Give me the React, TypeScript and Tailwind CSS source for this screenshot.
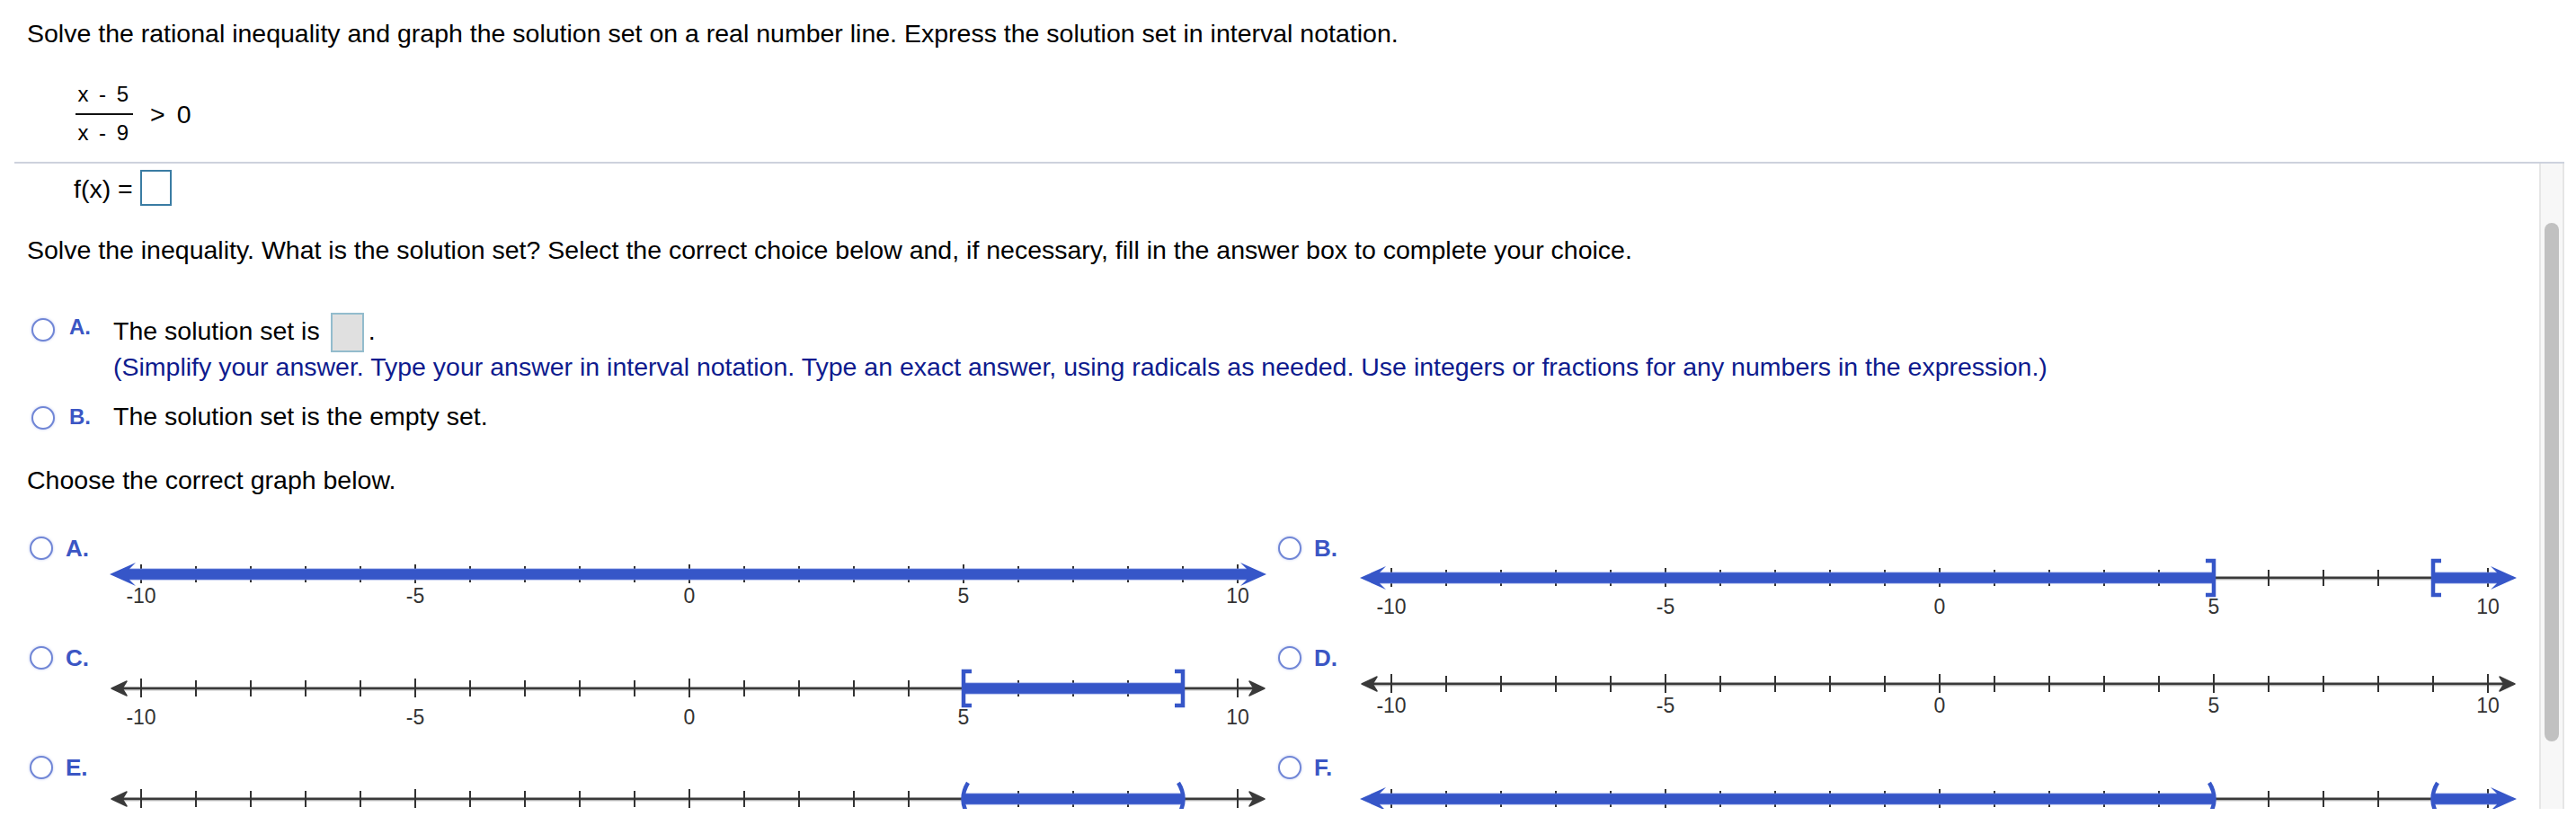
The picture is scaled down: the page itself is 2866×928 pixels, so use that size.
import React from 'react';

type Mark = '[' | ']' | '(' | ')';

interface Seg {
  from: number | null;
  to: number | null;
  left?: Mark;
  right?: Mark;
}

interface LineProps {
  lineY: number;
  labelY: number | null;
  segs: Seg[];
}

const BLUE = '#3656c8';
const GRAY = '#3a3a3a';

// -10 sits at 44, one unit is 61px
const px = (v: number) => 44 + (v + 10) * 61;

const marker = (m: Mark, x0: number, y: number, key: string) => {
  let d = '';
  if (m === '[') d = `M${x0 + 9} ${y - 19} H${x0} V${y + 19} H${x0 + 9}`;
  if (m === ']') d = `M${x0 - 9} ${y - 19} H${x0} V${y + 19} H${x0 - 9}`;
  if (m === '(') d = `M${x0 + 5} ${y - 18} Q${x0 - 6} ${y} ${x0 + 5} ${y + 18}`;
  if (m === ')') d = `M${x0 - 5} ${y - 18} Q${x0 + 6} ${y} ${x0 - 5} ${y + 18}`;
  return <path key={key} d={d} fill="none" stroke={BLUE} strokeWidth={4.5} />;
};

const NumberLine: React.FC<LineProps> = ({ lineY: y, labelY, segs }) => {
  const ticks = Array.from({ length: 21 }, (_, i) => i - 10);
  const blueLeft = segs.some((s) => s.from === null);
  const blueRight = segs.some((s) => s.to === null);

  return (
    <svg width={1300} height={80} className="block overflow-visible">
      <line x1={20} x2={1285} y1={y} y2={y} stroke={GRAY} strokeWidth={3} />
      <line x1={20} x2={1285} y1={y + 2} y2={y + 2} stroke="#c4c4c4" strokeWidth={1} />
      {!blueLeft && (
        <path
          d={`M11 ${y} L28 ${y - 8} L23 ${y} L28 ${y + 8} Z`}
          fill={GRAY}
          stroke={GRAY}
          strokeWidth={1.5}
          strokeLinejoin="round"
        />
      )}
      {!blueRight && (
        <path
          d={`M1294 ${y} L1277 ${y - 8} L1282 ${y} L1277 ${y + 8} Z`}
          fill={GRAY}
          stroke={GRAY}
          strokeWidth={1.5}
          strokeLinejoin="round"
        />
      )}
      {ticks.map((v) => {
        const major = v % 5 === 0;
        return (
          <line
            key={v}
            x1={px(v)}
            x2={px(v)}
            y1={major ? y - 11 : y - 9}
            y2={major ? y + 10 : y + 9}
            stroke="#333"
            strokeWidth={2}
          />
        );
      })}
      {segs.map((s, i) => {
        const x1 = s.from === null ? 30 : px(s.from);
        const x2 = s.to === null ? 1275 : px(s.to);
        return (
          <g key={i}>
            <rect x={x1} y={y - 6} width={x2 - x1} height={12} fill={BLUE} stroke="#6f86dc" strokeWidth={0.8} />
            {s.from === null && (
              <path d={`M9 ${y} L38 ${y - 13} L31 ${y - 6} L31 ${y + 6} L38 ${y + 13} Z`} fill={BLUE} />
            )}
            {s.to === null && (
              <path d={`M1296 ${y} L1267 ${y - 13} L1274 ${y - 6} L1274 ${y + 6} L1267 ${y + 13} Z`} fill={BLUE} />
            )}
            {s.left && s.from !== null && marker(s.left, px(s.from), y, 'l')}
            {s.right && s.to !== null && marker(s.right, px(s.to), y, 'r')}
          </g>
        );
      })}
      {labelY !== null &&
        [-10, -5, 0, 5, 10].map((v) => (
          <text key={v} x={px(v)} y={labelY} textAnchor="middle" fontSize={23} fill="#333">
            {v}
          </text>
        ))}
    </svg>
  );
};

const Radio = () => (
  <span className="block w-[26px] h-[26px] shrink-0 rounded-full border-2 border-[#7086d6] bg-white shadow-[0_0_3px_rgba(90,115,215,0.4)]" />
);

const graphs: { key: string; line: LineProps }[] = [
  { key: 'A', line: { lineY: 14, labelY: 46, segs: [{ from: null, to: null }] } },
  {
    key: 'B',
    line: {
      lineY: 18,
      labelY: 58,
      segs: [
        { from: null, to: 5, right: ']' },
        { from: 9, to: null, left: '[' },
      ],
    },
  },
  { key: 'C', line: { lineY: 19, labelY: 59, segs: [{ from: 5, to: 9, left: '[', right: ']' }] } },
  { key: 'D', line: { lineY: 14, labelY: 46, segs: [] } },
  // last row is scrolled past the bottom of the pane, labels are out of view
  { key: 'E', line: { lineY: 20, labelY: null, segs: [{ from: 5, to: 9, left: '(', right: ')' }] } },
  {
    key: 'F',
    line: {
      lineY: 20,
      labelY: null,
      segs: [
        { from: null, to: 5, right: ')' },
        { from: 9, to: null, left: '(' },
      ],
    },
  },
];

export default function App() {
  return (
    <div className="w-[2866px] h-[928px] overflow-hidden bg-white text-black font-['Liberation_Sans',Arial,sans-serif] pl-[16px] pr-[13px] flex flex-col">
      {/* Question header */}
      <div className="pl-[14px] pt-[22px] pb-[19px]">
        <p className="text-[28.5px] leading-[30px]">
          Solve the rational inequality and graph the solution set on a real number line. Express the solution set in
          interval notation.
        </p>
        <div className="mt-[40px] ml-[54px] flex items-center">
          <div className="flex flex-col items-center w-[64px]">
            <span className="text-[24px] leading-[26px] tracking-[2.5px] whitespace-pre">x - 5</span>
            <span className="block mt-[8px] h-[2px] w-full bg-[#111]" />
            <span className="mt-[7px] text-[24px] leading-[26px] tracking-[2.5px] whitespace-pre">x - 9</span>
          </div>
          <span className="ml-[19px] text-[28.5px] leading-[30px]">&gt;</span>
          <span className="ml-[13px] text-[28.5px] leading-[30px]">0</span>
        </div>
      </div>
      <div className="h-[2px] shrink-0 bg-[#cdd2dd]" />

      {/* Scrolling answer pane */}
      <div className="flex h-[718px] shrink-0">
        <div className="flex-1 overflow-hidden pl-[14px]">
          <div className="mt-[7px] ml-[52px] flex items-start">
            <span className="mt-[6px] text-[28.5px] leading-[30px] whitespace-pre">f(x) =</span>
            <span className="ml-[8px] w-[35px] h-[40px] border-2 border-[#3a7ca3] bg-white" />
          </div>

          <p className="mt-[34px] text-[28.5px] leading-[30px]">
            Solve the inequality. What is the solution set? Select the correct choice below and, if necessary, fill in
            the answer box to complete your choice.
          </p>

          <div className="mt-[55px] flex items-start">
            <span className="ml-[5px] mt-[6px]">
              <Radio />
            </span>
            <span className="ml-[16px] w-[49px] mt-[3px] text-[24px] leading-[26px] font-bold text-[#3b56c4]">A.</span>
            <span className="mt-[5px] text-[28.5px] leading-[30px]">The solution set is</span>
            <span className="ml-[12px] w-[37px] h-[44px] border-2 border-[#93bccd] bg-[#e0e0e0]" />
            <span className="ml-[5px] mt-[5px] text-[28.5px] leading-[30px]">.</span>
          </div>
          <p className="mt-[1px] pl-[96px] text-[28.5px] leading-[30px] text-[#0e1b8e]">
            (Simplify your answer. Type your answer in interval notation. Type an exact answer, using radicals as
            needed. Use integers or fractions for any numbers in the expression.)
          </p>

          <div className="mt-[25px] flex items-start">
            <span className="ml-[5px] mt-[4px]">
              <Radio />
            </span>
            <span className="ml-[16px] w-[49px] mt-[3px] text-[24px] leading-[26px] font-bold text-[#3b56c4]">B.</span>
            <span className="text-[28.5px] leading-[30px]">The solution set is the empty set.</span>
          </div>

          <p className="mt-[41px] text-[28.5px] leading-[30px]">Choose the correct graph below.</p>

          <div className="mt-[46px] grid grid-cols-[1389px_1fr] gap-y-[12px]">
            {graphs.map((g, i) => (
              <div key={g.key} className="pl-[3px]">
                <div className="flex items-center h-[30px]">
                  <Radio />
                  <span className="ml-[14px] text-[26px] leading-[30px] font-bold text-[#3b56c4]">{g.key}.</span>
                </div>
                <div className={i % 2 === 0 ? 'ml-[80px]' : 'ml-[82px]'}>
                  <NumberLine {...g.line} />
                </div>
              </div>
            ))}
          </div>
        </div>

        {/* scrollbar */}
        <div className="w-[28px] shrink-0 border-x-2 border-[#e6e6e6] bg-[#f7f7f7] flex justify-center pt-[66px]">
          <div className="w-[16px] h-[577px] rounded-full bg-[#c1c1c1]" />
        </div>
      </div>
    </div>
  );
}
